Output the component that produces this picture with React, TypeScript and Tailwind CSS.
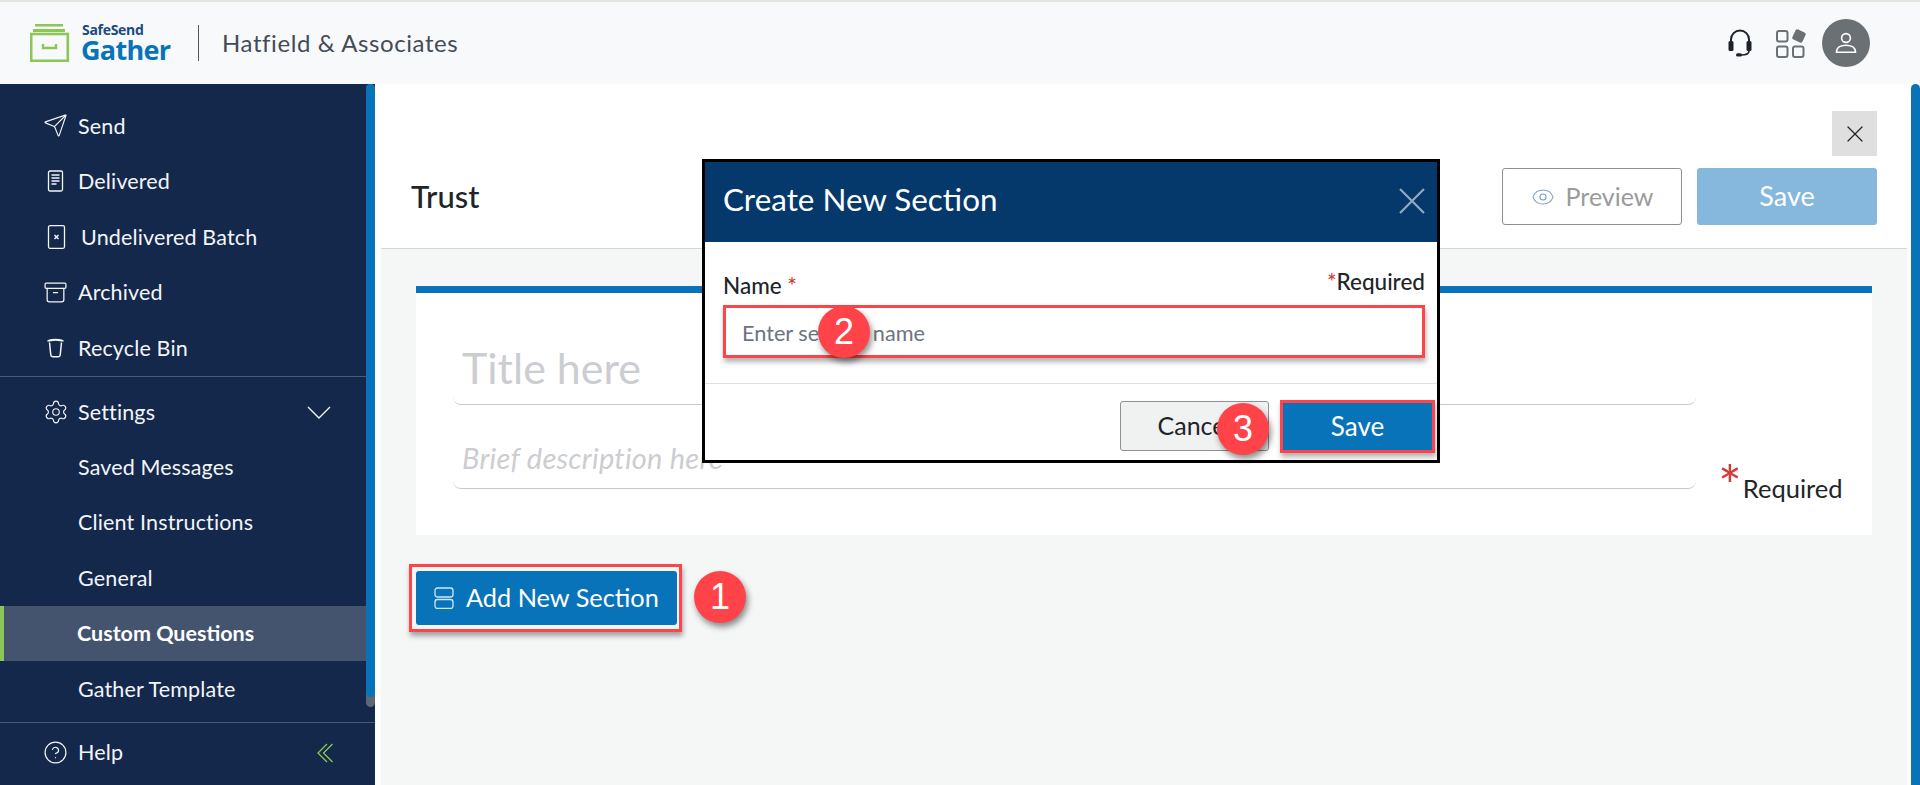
import { Archive, CircleHelp, Eye, Send, Settings, X } from "lucide-react"

const IconDoc = () => (
  <svg width="21" height="22" viewBox="0 0 21 22" fill="none" stroke="currentColor" strokeWidth="1.3">
    <rect x="3.5" y="1" width="14" height="20" rx="1.5" />
    <path d="M6.5 5h8M6.5 8h8M6.5 11h8M6.5 14h5" />
  </svg>
)

const IconBatch = () => (
  <svg width="21" height="24" viewBox="0 0 21 24" fill="none" stroke="currentColor" strokeWidth="1.3">
    <rect x="3.5" y="0.7" width="16" height="22.6" rx="1.5" />
    <path d="M9.5 10l4 4M13.5 10l-4 4" strokeWidth="1.5" />
  </svg>
)

const IconBin = () => (
  <svg width="21" height="20" viewBox="0 0 21 20" fill="none" stroke="currentColor" strokeWidth="1.5">
    <path d="M4.5 4.5l1.3 12.5c.1 1 .8 1.7 1.8 1.7h5.8c1 0 1.7-.7 1.8-1.7L16.5 4.5" />
    <path d="M3.2 3.4c0-2.2 14.6-2.2 14.6 0" strokeWidth="2.2" />
  </svg>
)

const IconHeadset = () => (
  <svg width="24" height="28" viewBox="0 0 24 28" fill="none" stroke="#1d2228">
    <path d="M3 13V10.5a9 9 0 0 1 18 0V13" strokeWidth="2" />
    <rect x="0.5" y="12" width="5" height="10" rx="1.5" fill="#1d2228" stroke="none" />
    <rect x="18.5" y="12" width="5" height="10" rx="1.5" fill="#1d2228" stroke="none" />
    <path d="M21 22c0 3-3 4-8 4" strokeWidth="1.7" />
    <rect x="8" y="24.2" width="6" height="3.4" rx="1.7" fill="#1d2228" stroke="none" />
  </svg>
)

const IconApps = () => (
  <svg width="30" height="29" viewBox="0 0 30 29" fill="none" stroke="#6b7075" strokeWidth="2">
    <rect x="1" y="2" width="10.5" height="10.5" rx="2" />
    <rect x="1" y="17.5" width="10.5" height="10.5" rx="2" />
    <rect x="17" y="17.5" width="10.5" height="10.5" rx="2" />
    <rect x="17.5" y="1.5" width="11" height="11" rx="2" fill="#6b7075" stroke="none" transform="rotate(25 23 7)" />
  </svg>
)

const IconUser = () => (
  <svg width="22" height="22" viewBox="0 0 22 22" fill="none" stroke="white" strokeWidth="1.6">
    <circle cx="11" cy="6" r="4.4" />
    <path d="M1.5 20.2c0-4.6 4-7 9.5-7s9.5 2.4 9.5 7z" />
  </svg>
)

const Callout = ({ n, className }: { n: number; className: string }) => (
  <div
    className={`absolute flex h-[52px] w-[52px] items-center justify-center rounded-full bg-[#ff4349] font-['Liberation_Sans',sans-serif] text-[36px] text-white shadow-[2px_4px_6px_rgba(0,0,0,0.45)] ${className}`}
  >
    {n}
  </div>
)

const topItems = [
  { label: "Send", icon: <Send size={25} strokeWidth={1.1} className="-ml-[2px]" /> },
  { label: "Delivered", icon: <IconDoc /> },
  { label: "Undelivered Batch", icon: <IconBatch />, shift: true },
  { label: "Archived", icon: <Archive size={25} strokeWidth={1.2} className="-ml-[2px]" /> },
  { label: "Recycle Bin", icon: <IconBin /> },
]

const subItems = ["Saved Messages", "Client Instructions", "General", "Custom Questions", "Gather Template"]

export default function App() {
  return (
    <div className="relative flex h-[785px] w-[1920px] flex-col overflow-hidden bg-white font-['Lato',sans-serif] text-[#212529]">
      <header className="flex h-[84px] shrink-0 items-center border-t-2 border-[#e2e5e0] bg-[#f8f9fb] pl-[30px] pr-[50px]">
        <svg width="40" height="38" viewBox="0 0 40 38" fill="none">
          <rect x="5" y="0" width="28" height="2.5" fill="#8bc656" />
          <rect x="3" y="5" width="32" height="3" fill="#8bc656" />
          <rect x="1.2" y="10" width="36.6" height="26.8" stroke="#8bc656" strokeWidth="2.6" />
          <path d="M13 20v4h13v-4" stroke="#8bc656" strokeWidth="2.4" />
        </svg>
        <div className="ml-[11px] flex w-[90px] flex-col font-['Open_Sans',sans-serif] font-bold">
          <span className="ml-[1px] text-[14px] leading-[13px] tracking-[-0.3px] text-[#1a4a80]">SafeSend</span>
          <span className="text-[27px] leading-[27px] tracking-[-0.7px] text-[#0973ba]">Gather</span>
        </div>
        <div className="ml-[27px] h-[36px] w-px bg-[#555]" />
        <span className="ml-[23px] text-[24px] tracking-[0.58px] text-[#444b55]">Hatfield &amp; Associates</span>
        <div className="ml-auto flex items-center">
          <IconHeadset />
          <div className="ml-[24px]">
            <IconApps />
          </div>
          <div className="ml-[16px] flex h-[48px] w-[48px] items-center justify-center rounded-full bg-[#6b7075]">
            <IconUser />
          </div>
        </div>
      </header>

      <div className="flex min-h-0 flex-1">
        <aside className="flex w-[375px] shrink-0 flex-col bg-[#14284b] text-[21.5px] tracking-[0.15px] text-[#f3f5f8]">
          <div className="flex h-[638px]">
            <nav className="flex w-[366px] flex-col pt-[14px]">
              {topItems.map((item) => (
                <div key={item.label} className="flex h-[55.5px] shrink-0 items-center pl-[45px]">
                  <span className="flex w-[33px] shrink-0">{item.icon}</span>
                  <span className={item.shift ? "ml-[3px]" : ""}>{item.label}</span>
                </div>
              ))}
              <div className="mb-[7px] h-px bg-[#4b5a75]" />
              <div className="flex h-[55.5px] shrink-0 items-center pl-[45px] pr-[35px] pt-[2px]">
                <span className="flex w-[33px] shrink-0">
                  <Settings size={26} strokeWidth={1.05} className="-ml-[2px]" />
                </span>
                <span>Settings</span>
                <svg width="24" height="13" viewBox="0 0 24 13" fill="none" stroke="currentColor" strokeWidth="1.4" className="ml-auto">
                  <path d="M1 1l11 11L23 1" />
                </svg>
              </div>
              {subItems.map((label) => (
                <div
                  key={label}
                  className={
                    label === "Custom Questions"
                      ? "flex h-[55.5px] shrink-0 items-center border-l-4 border-[#8bc656] bg-[#44546f] pl-[73px] text-[21.5px] font-bold tracking-normal text-white"
                      : "flex h-[55.5px] shrink-0 items-center pl-[78px]"
                  }
                >
                  {label}
                </div>
              ))}
            </nav>
            <div className="w-[9px]">
              <div className="h-[623px] rounded-md bg-[#5d6675]">
                <div className="h-[613px] rounded-md bg-[#0973ba]" />
              </div>
            </div>
          </div>
          <div className="flex flex-1 items-center border-t border-[#4b5a75] pb-[3px] pl-[45px] pr-[42px]">
            <span className="flex w-[33px] shrink-0">
              <CircleHelp size={25} strokeWidth={1.15} className="-ml-[2px]" />
            </span>
            <span>Help</span>
            <svg width="16" height="20" viewBox="0 0 16 20" fill="none" stroke="#8bc656" strokeWidth="1.3" className="ml-auto">
              <path d="M10 1L1 10l9 9M15.5 1l-9 9 9 9" />
            </svg>
          </div>
        </aside>

        <main className="flex min-w-0 flex-1 pl-[6px]">
          <div className="flex w-[1526px] flex-col bg-[#f5f7f7]">
            <div className="h-[165px] shrink-0 border-b border-[#d5d7d8] bg-white px-[30px] pt-[27px]">
              <div className="flex justify-end">
                <button className="flex h-[45px] w-[45px] items-center justify-center bg-[#dfdfdf]">
                  <X size={28} strokeWidth={1.05} />
                </button>
              </div>
              <div className="mt-[12px] flex h-[57px] items-center">
                <span className="text-[31px] font-medium">Trust</span>
                <button className="ml-auto flex h-[57px] w-[180px] items-center justify-center rounded-[3px] border border-[#8f8f8f] text-[25px] text-[#9a9a9a]">
                  <Eye size={24} strokeWidth={1.1} className="mr-[11px] text-[#7f9fc4]" />
                  Preview
                </button>
                <button className="ml-[15px] h-[57px] w-[180px] rounded-[3px] bg-[#85b8dc] text-[27px] text-white">Save</button>
              </div>
            </div>

            <div className="px-[35px] pt-[37px]">
              <section className="flex h-[249px] border-t-[7px] border-[#0973ba] bg-white pl-[37px]">
                <div className="w-[1243px] shrink-0">
                  <div className="flex h-[112px] items-end rounded-b-lg border-b border-[#c8c9cb] pb-[8px] pl-[9px] text-[43px] leading-[56px] text-[#cbcdd0]">
                    Title here
                  </div>
                  <div className="flex h-[84px] items-end rounded-b-lg border-b border-[#c8c9cb] pb-[12px] pl-[9px] text-[29px] italic leading-[36px] tracking-[0.25px] text-[#cbcdd0]">
                    Brief description here
                  </div>
                </div>
                <div className="ml-[22px] flex h-[210px] items-end text-[25.5px] leading-[30px]">
                  <span className="relative -top-[3px] mr-[1px] text-[56px] leading-[30px] text-[#d13b3b]">*</span>
                  Required
                </div>
              </section>

              <div className="relative mt-[36px] w-fit">
                <button className="flex h-[54px] w-[261px] items-center rounded-[3px] bg-[#0973ba] pl-[18px] text-[25.3px] text-white">
                  <svg width="20" height="22" viewBox="0 0 20 22" fill="none" stroke="#cfe6f6" strokeWidth="1.3" className="mr-[12px]">
                    <rect x="1" y="1" width="18" height="9" rx="2.5" />
                    <rect x="1" y="12.5" width="18" height="9" rx="2.5" />
                  </svg>
                  Add New Section
                </button>
                <div className="absolute -bottom-[7px] -left-[7px] -right-[5px] -top-[7px] border-[3px] border-[#ff4349] shadow-[1px_4px_5px_rgba(0,0,0,0.35)]" />
                <Callout n={1} className="left-[278px] top-[0px]" />
              </div>
            </div>
          </div>
          <div className="ml-auto w-[9px] rounded-t-md bg-[#0973ba]" />
        </main>
      </div>

      <div className="absolute left-[702px] top-[159px] h-[304px] w-[738px] border-[3px] border-black bg-white">
        <div className="flex h-[80px] items-center justify-between bg-[#05386b] pb-[2px] pl-[18px] pr-[12px] text-[31.4px] text-white">
          <span className="-mt-[3px]">Create New Section</span>
          <svg width="26" height="26" viewBox="0 0 26 26" fill="none" stroke="#93a9bd" strokeWidth="2.2">
            <path d="M1 1l24 24M25 1L1 25" />
          </svg>
        </div>
        <div className="h-[142px] border-b border-[#e0e0e0] pl-[18px] pr-[12px] pt-[29px]">
          <div className="flex items-start justify-between text-[22.5px] font-medium leading-[26px]">
            <span className="mt-[2px]">
              Name <span className="text-[#d13b3b]">*</span>
            </span>
            <span className="-mt-[2px]">
              <span className="text-[#d13b3b]">*</span>Required
            </span>
          </div>
          <div className="relative mt-[6px] flex h-[53px] items-center pl-[19px] pt-[3px] text-[21.7px] text-[#6c7480] shadow-[1px_4px_5px_rgba(0,0,0,0.3)]">
            Enter section name
            <div className="absolute inset-0 border-[3px] border-[#ff4349]" />
            <Callout n={2} className="left-[95px] top-[1px]" />
          </div>
        </div>
        <div className="flex items-center justify-end pr-[5px] pt-[17px]">
          <div className="relative flex items-center">
            <button className="flex h-[50px] w-[149px] items-center justify-center rounded-[3px] border border-[#8f9193] bg-[#f0f1f1] text-[25px]">
              Cancel
            </button>
            <Callout n={3} className="left-[97px] top-[2px]" />
          </div>
          <div className="relative ml-[14px]">
            <button className="h-[47px] w-[149px] bg-[#0973ba] text-[26px] text-white">Save</button>
            <div className="absolute -inset-[3px] border-[3px] border-[#ff4349] shadow-[1px_4px_5px_rgba(0,0,0,0.3)]" />
          </div>
        </div>
      </div>
    </div>
  )
}
